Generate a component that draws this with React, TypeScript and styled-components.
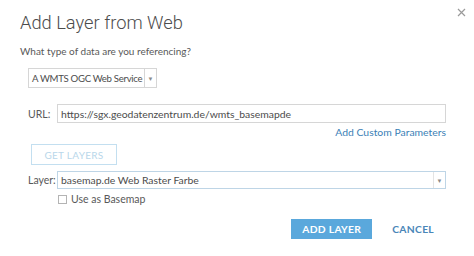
import React from "react"
import styled, { createGlobalStyle } from "styled-components"

const GlobalStyle = createGlobalStyle`
  html, body {
    margin: 0;
    padding: 0;
    background: #ffffff;
  }
  body {
    font-family: Lato, "Open Sans", sans-serif;
    color: #595959;
  }
`

const Dialog = styled.div`
  position: relative;
  width: 474px;
  height: 256px;
  box-sizing: border-box;
  padding: 11px 28px 0 20px;
  background: #ffffff;
  overflow: hidden;
`

const CloseButton = styled.button`
  position: absolute;
  top: 7px;
  right: 7px;
  width: 11px;
  height: 11px;
  padding: 0;
  border: none;
  background: transparent;
  display: flex;
  align-items: center;
  justify-content: center;
  cursor: pointer;
`

const Title = styled.h1`
  margin: 0;
  font-family: Roboto, Lato, sans-serif;
  font-size: 18.3px;
  line-height: 24px;
  font-weight: 300;
  color: #4c4c4c;
`

const Prompt = styled.p`
  margin: 9px 0 0;
  font-size: 10px;
  line-height: 14px;
  color: #595959;
`

const Body = styled.div`
  padding-left: 8px;
`

const Select = styled.div`
  margin-top: 10px;
  width: 129px;
  height: 20px;
  box-sizing: border-box;
  border: 1px solid #d6d6d6;
  display: flex;
  align-items: center;
  font-size: 9.6px;
  letter-spacing: -0.3px;
  color: #4c4c4c;
`

const SelectText = styled.span`
  flex: 1;
  padding-left: 3px;
  white-space: nowrap;
`

const Caret = styled.span<{ $divided?: boolean }>`
  width: 11px;
  height: 100%;
  flex: none;
  display: flex;
  align-items: center;
  justify-content: center;
  border-left: ${(p) => (p.$divided ? "1px solid #d6d6d6" : "1px solid #e4e4e4")};
  font-size: 6px;
  letter-spacing: 0;
  color: #8a8a8a;
`

const FieldRow = styled.div<{ $top: number }>`
  margin-top: ${(p) => p.$top}px;
  display: flex;
  align-items: center;
`

const Label = styled.label`
  width: 29px;
  font-size: 10.5px;
  color: #595959;
`

const Input = styled.div<{ $focus?: boolean; $height: number }>`
  flex: 1;
  height: ${(p) => p.$height}px;
  box-sizing: border-box;
  border: 1px solid ${(p) => (p.$focus ? "#bed5e6" : "#d6d6d6")};
  display: flex;
  align-items: center;
  font-size: 10.4px;
  color: #4c4c4c;
  white-space: nowrap;
`

const InputText = styled.span`
  flex: 1;
  padding-left: 3px;
`

const LinkRow = styled.div`
  margin-top: 2px;
  text-align: right;
  font-size: 10.4px;
  line-height: 14px;
  color: #3b7fb6;
`

const GhostButton = styled.button`
  margin: 5px 0 0 3px;
  width: 86px;
  height: 21px;
  border: 1px solid #c3dff0;
  background: #ffffff;
  color: #b9d7ea;
  font-family: inherit;
  font-size: 10px;
  letter-spacing: 0.3px;
  padding: 0;
  display: block;
`

const CheckRow = styled.div`
  margin: 5px 0 0 30px;
  display: flex;
  align-items: center;
  gap: 4px;
  font-size: 10.5px;
  height: 10px;
  color: #595959;
`

const Box = styled.span`
  width: 9px;
  height: 9px;
  box-sizing: border-box;
  border: 1px solid #b4b4b4;
  background: #ffffff;
`

const Footer = styled.div`
  margin-top: 15px;
  display: flex;
  justify-content: flex-end;
  align-items: center;
  gap: 20px;
`

const Button = styled.button<{ $primary?: boolean }>`
  height: 20px;
  padding: 0;
  width: ${(p) => (p.$primary ? "81px" : "auto")};
  border: none;
  background: ${(p) => (p.$primary ? "#5aa8dc" : "transparent")};
  color: ${(p) => (p.$primary ? "#ffffff" : "#4a86b8")};
  font-family: inherit;
  font-size: 10.3px;
  font-weight: 700;
  letter-spacing: 0.3px;
  white-space: nowrap;
  margin-right: ${(p) => (p.$primary ? "0" : "12px")};
`

export default function App() {
  return (
    <>
      <GlobalStyle />
      <Dialog>
        <CloseButton aria-label="Close">
          <svg width="9" height="9" viewBox="0 0 9 9">
            <path d="M1 1 L8 8 M8 1 L1 8" stroke="#9a9a9a" strokeWidth="1.2" />
          </svg>
        </CloseButton>
        <Title>Add Layer from Web</Title>
        <Prompt>What type of data are you referencing?</Prompt>
        <Body>
          <Select>
            <SelectText>A WMTS OGC Web Service</SelectText>
            <Caret $divided>▼</Caret>
          </Select>
          <FieldRow $top={16}>
            <Label>URL:</Label>
            <Input $height={19}>
              <InputText>https://sgx.geodatenzentrum.de/wmts_basemapde</InputText>
            </Input>
          </FieldRow>
          <LinkRow>Add Custom Parameters</LinkRow>
          <GhostButton>GET LAYERS</GhostButton>
          <FieldRow $top={6}>
            <Label>Layer:</Label>
            <Input $height={18} $focus>
              <InputText>basemap.de Web Raster Farbe</InputText>
              <Caret>▼</Caret>
            </Input>
          </FieldRow>
          <CheckRow>
            <Box />
            Use as Basemap
          </CheckRow>
          <Footer>
            <Button $primary>ADD LAYER</Button>
            <Button>CANCEL</Button>
          </Footer>
        </Body>
      </Dialog>
    </>
  )
}
